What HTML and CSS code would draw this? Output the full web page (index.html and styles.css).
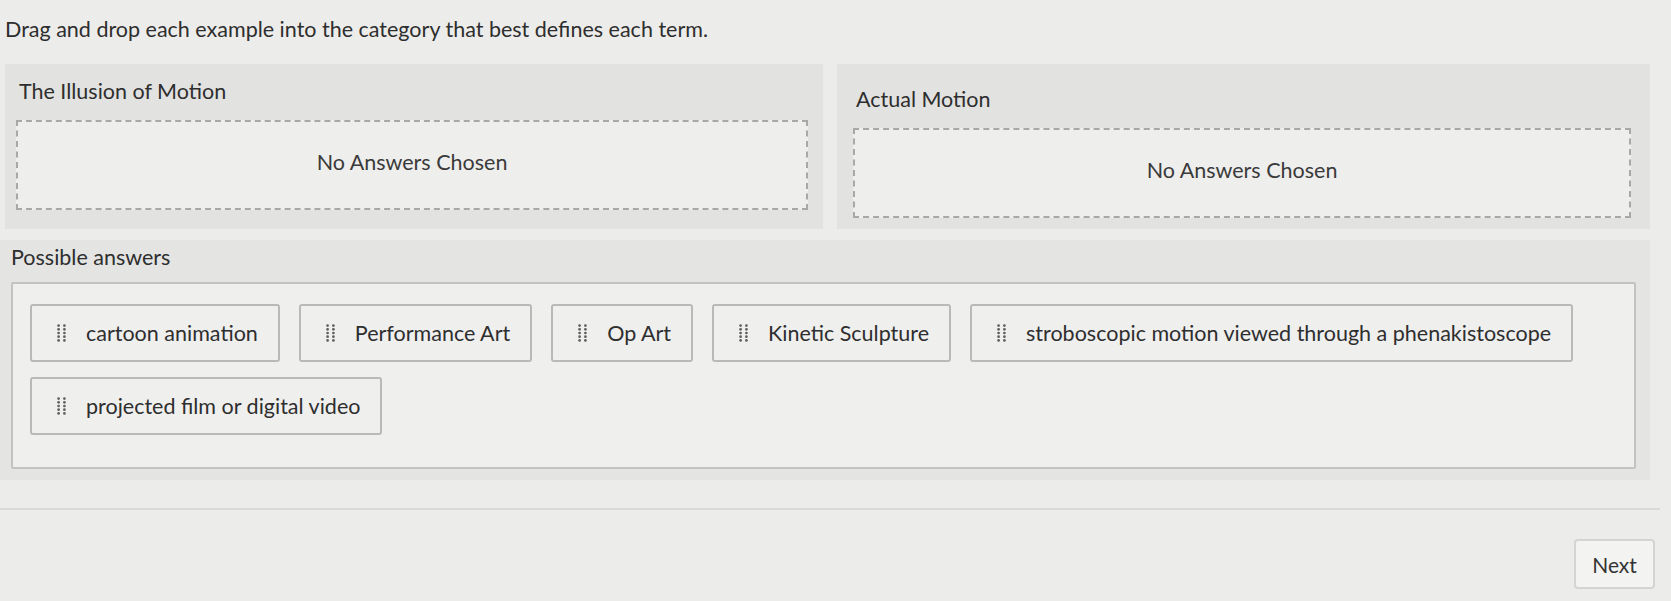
FILE: index.html
```html
<!DOCTYPE html>
<html lang="en">
<head>
<meta charset="utf-8">
<title>Drag and drop</title>
<link rel="stylesheet" href="styles.css">
</head>
<body>
<div class="page">
  <h1 class="prompt">Drag and drop each example into the category that best defines each term.</h1>

  <div class="categories">
    <section class="category">
      <h2 class="cat-title">The Illusion of Motion</h2>
      <div class="dropzone">No Answers Chosen</div>
    </section>
    <section class="category">
      <h2 class="cat-title">Actual Motion</h2>
      <div class="dropzone">No Answers Chosen</div>
    </section>
  </div>

  <section class="possible">
    <h2 class="possible-title">Possible answers</h2>
    <div class="answers">
      <div class="chip"><svg class="grip" viewBox="0 0 9 18" width="9" height="18"><g fill="#5f5f5f"><circle cx="1.6" cy="1.6" r="1.35"/><circle cx="7.4" cy="1.6" r="1.35"/><circle cx="1.6" cy="5.3" r="1.35"/><circle cx="7.4" cy="5.3" r="1.35"/><circle cx="1.6" cy="9" r="1.35"/><circle cx="7.4" cy="9" r="1.35"/><circle cx="1.6" cy="12.7" r="1.35"/><circle cx="7.4" cy="12.7" r="1.35"/><circle cx="1.6" cy="16.4" r="1.35"/><circle cx="7.4" cy="16.4" r="1.35"/></g></svg><span>cartoon animation</span></div>
      <div class="chip"><svg class="grip" viewBox="0 0 9 18" width="9" height="18"><g fill="#5f5f5f"><circle cx="1.6" cy="1.6" r="1.35"/><circle cx="7.4" cy="1.6" r="1.35"/><circle cx="1.6" cy="5.3" r="1.35"/><circle cx="7.4" cy="5.3" r="1.35"/><circle cx="1.6" cy="9" r="1.35"/><circle cx="7.4" cy="9" r="1.35"/><circle cx="1.6" cy="12.7" r="1.35"/><circle cx="7.4" cy="12.7" r="1.35"/><circle cx="1.6" cy="16.4" r="1.35"/><circle cx="7.4" cy="16.4" r="1.35"/></g></svg><span>Performance Art</span></div>
      <div class="chip"><svg class="grip" viewBox="0 0 9 18" width="9" height="18"><g fill="#5f5f5f"><circle cx="1.6" cy="1.6" r="1.35"/><circle cx="7.4" cy="1.6" r="1.35"/><circle cx="1.6" cy="5.3" r="1.35"/><circle cx="7.4" cy="5.3" r="1.35"/><circle cx="1.6" cy="9" r="1.35"/><circle cx="7.4" cy="9" r="1.35"/><circle cx="1.6" cy="12.7" r="1.35"/><circle cx="7.4" cy="12.7" r="1.35"/><circle cx="1.6" cy="16.4" r="1.35"/><circle cx="7.4" cy="16.4" r="1.35"/></g></svg><span>Op Art</span></div>
      <div class="chip"><svg class="grip" viewBox="0 0 9 18" width="9" height="18"><g fill="#5f5f5f"><circle cx="1.6" cy="1.6" r="1.35"/><circle cx="7.4" cy="1.6" r="1.35"/><circle cx="1.6" cy="5.3" r="1.35"/><circle cx="7.4" cy="5.3" r="1.35"/><circle cx="1.6" cy="9" r="1.35"/><circle cx="7.4" cy="9" r="1.35"/><circle cx="1.6" cy="12.7" r="1.35"/><circle cx="7.4" cy="12.7" r="1.35"/><circle cx="1.6" cy="16.4" r="1.35"/><circle cx="7.4" cy="16.4" r="1.35"/></g></svg><span>Kinetic Sculpture</span></div>
      <div class="chip"><svg class="grip" viewBox="0 0 9 18" width="9" height="18"><g fill="#5f5f5f"><circle cx="1.6" cy="1.6" r="1.35"/><circle cx="7.4" cy="1.6" r="1.35"/><circle cx="1.6" cy="5.3" r="1.35"/><circle cx="7.4" cy="5.3" r="1.35"/><circle cx="1.6" cy="9" r="1.35"/><circle cx="7.4" cy="9" r="1.35"/><circle cx="1.6" cy="12.7" r="1.35"/><circle cx="7.4" cy="12.7" r="1.35"/><circle cx="1.6" cy="16.4" r="1.35"/><circle cx="7.4" cy="16.4" r="1.35"/></g></svg><span>stroboscopic motion viewed through a phenakistoscope</span></div>
      <div class="chip"><svg class="grip" viewBox="0 0 9 18" width="9" height="18"><g fill="#5f5f5f"><circle cx="1.6" cy="1.6" r="1.35"/><circle cx="7.4" cy="1.6" r="1.35"/><circle cx="1.6" cy="5.3" r="1.35"/><circle cx="7.4" cy="5.3" r="1.35"/><circle cx="1.6" cy="9" r="1.35"/><circle cx="7.4" cy="9" r="1.35"/><circle cx="1.6" cy="12.7" r="1.35"/><circle cx="7.4" cy="12.7" r="1.35"/><circle cx="1.6" cy="16.4" r="1.35"/><circle cx="7.4" cy="16.4" r="1.35"/></g></svg><span>projected film or digital video</span></div>
    </div>
  </section>

  <footer class="footer">
    <button class="next" type="button">Next</button>
  </footer>
</div>
</body>
</html>
```

FILE: styles.css
```css
* { box-sizing: border-box; }

html, body {
  margin: 0;
  padding: 0;
  background: #ececeb;
  color: #333;
  font-family: Lato, "Open Sans", "Liberation Sans", sans-serif;
}

.page {
  width: 1671px;
  height: 601px;
  overflow: hidden;
}

.prompt {
  margin: 0;
  padding: 16px 0 0 5px;
  height: 64px;
  font-size: 21.5px;
  font-weight: 400;
  line-height: 26px;
  color: #2e2e2e;
}

.categories {
  display: grid;
  grid-template-columns: 818px 813px;
  gap: 14px;
  margin-left: 5px;
  width: 1645px;
}

.category {
  background: #e2e2e1;
  padding: 14px 15px 19px 11px;
}

.category + .category {
  padding: 22px 19px 9px 16px;
}

.cat-title {
  margin: 0 0 16px 3px;
  font-size: 21.5px;
  font-weight: 400;
  line-height: 26px;
  color: #2e2e2e;
}

.dropzone {
  height: 90px;
  border: 2px dashed #a8a8a8;
  background: #eeeeed;
  display: flex;
  align-items: center;
  justify-content: center;
  font-size: 21.5px;
  color: #3a3a3a;
  padding-bottom: 6px;
}

.possible {
  margin-top: 11px;
  width: 1650px;
  height: 240px;
  background: #e4e4e3;
  padding: 4px 14px 11px 11px;
}

.possible-title {
  margin: 0 0 12px 0;
  font-size: 21.5px;
  font-weight: 400;
  line-height: 26px;
  color: #2e2e2e;
}

.answers {
  border: 2px solid #c2c2c1;
  border-radius: 2px;
  background: #efefee;
  height: 187px;
  padding: 20px 17px 0 17px;
  display: flex;
  flex-wrap: wrap;
  align-content: flex-start;
  gap: 15px 19px;
}

.chip {
  display: flex;
  align-items: center;
  gap: 20px;
  height: 58px;
  padding: 0 20px 0 25px;
  border: 2px solid #b9b9b8;
  border-radius: 3px;
  background: #efefee;
  font-size: 21.5px;
  color: #2e2e2e;
}

.grip { flex: none; }

.footer {
  margin-top: 28px;
  width: 1660px;
  border-top: 2px solid #dadad9;
  padding-top: 29px;
  display: flex;
  justify-content: flex-end;
}

.next {
  width: 81px;
  height: 50px;
  border: 2px solid #d4d4d3;
  border-radius: 4px;
  background: #f3f3f2;
  font-family: Lato, "Open Sans", "Liberation Sans", sans-serif;
  font-size: 21px;
  color: #333;
  margin-right: 5px;
}
```
